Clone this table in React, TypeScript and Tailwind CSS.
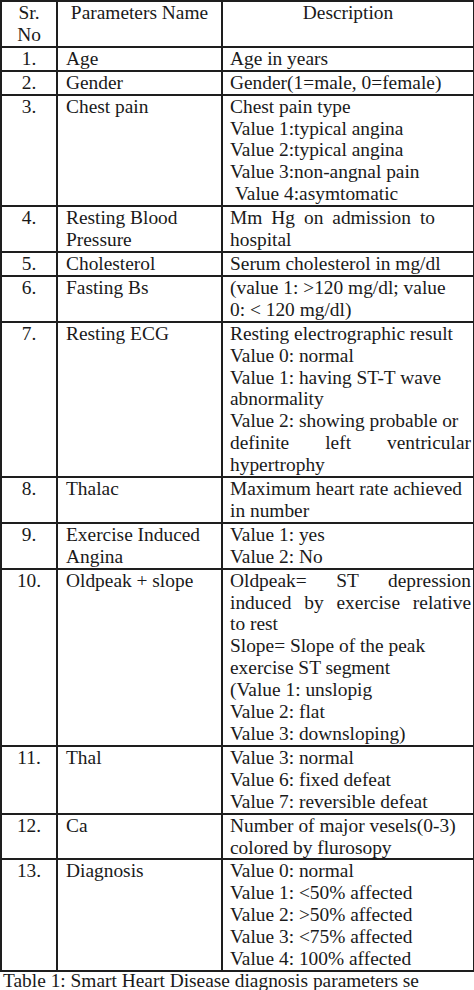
import React from 'react';

type Line = { text: string; justify?: boolean; indent?: boolean; width?: string };
type Row = { no: string; name: string[]; desc: Line[] };

const L = (text: string, justify = false, indent = false, width?: string): Line => ({ text, justify, indent, width });

const rows: Row[] = [
  { no: '1.', name: ['Age'], desc: [L('Age in years')] },
  { no: '2.', name: ['Gender'], desc: [L('Gender(1=male, 0=female)')] },
  {
    no: '3.',
    name: ['Chest pain'],
    desc: [
      L('Chest pain type'),
      L('Value 1:typical angina'),
      L('Value 2:typical angina'),
      L('Value 3:non-angnal pain'),
      L('Value 4:asymtomatic', false, true),
    ],
  },
  {
    no: '4.',
    name: ['Resting Blood', 'Pressure'],
    desc: [L('Mm Hg on admission to', true, false, 'w-[205px]'), L('hospital')],
  },
  { no: '5.', name: ['Cholesterol'], desc: [L('Serum cholesterol in mg/dl')] },
  { no: '6.', name: ['Fasting Bs'], desc: [L('(value 1: >120 mg/dl; value'), L('0: < 120 mg/dl)')] },
  {
    no: '7.',
    name: ['Resting ECG'],
    desc: [
      L('Resting electrographic result'),
      L('Value 0: normal'),
      L('Value 1: having ST-T wave'),
      L('abnormality'),
      L('Value 2: showing probable or'),
      L('definite left ventricular', true),
      L('hypertrophy'),
    ],
  },
  { no: '8.', name: ['Thalac'], desc: [L('Maximum heart rate achieved'), L('in number')] },
  { no: '9.', name: ['Exercise Induced', 'Angina'], desc: [L('Value 1: yes'), L('Value 2: No')] },
  {
    no: '10.',
    name: ['Oldpeak + slope'],
    desc: [
      L('Oldpeak= ST depression', true),
      L('induced by exercise relative', true),
      L('to rest'),
      L('Slope= Slope of the peak'),
      L('exercise ST segment'),
      L('(Value 1: unslopig'),
      L('Value 2: flat'),
      L('Value 3: downsloping)'),
    ],
  },
  {
    no: '11.',
    name: ['Thal'],
    desc: [L('Value 3: normal'), L('Value 6: fixed defeat'), L('Value 7: reversible defeat')],
  },
  { no: '12.', name: ['Ca'], desc: [L('Number of major vesels(0-3)'), L('colored by flurosopy')] },
  {
    no: '13.',
    name: ['Diagnosis'],
    desc: [
      L('Value 0: normal'),
      L('Value 1: <50% affected'),
      L('Value 2: >50% affected'),
      L('Value 3: <75% affected'),
      L('Value 4: 100% affected'),
    ],
  },
];

const cell = 'border-2 border-[#1e1e1e] align-top p-0';

export default function App() {
  return (
    <div className="w-[474px] h-[990px] bg-white overflow-hidden font-['Liberation_Serif',serif] text-[19.4px] leading-[21.9px] text-[#1a1a1a]">
      <table className="w-[473px] table-fixed border-collapse">
        <colgroup>
          <col className="w-[56px]" />
          <col className="w-[165px]" />
          <col className="w-[252px]" />
        </colgroup>
        <thead>
          <tr>
            <th className={`${cell} font-normal text-center`}>
              <div>Sr.</div>
              <div>No</div>
            </th>
            <th className={`${cell} font-normal text-center`}>Parameters Name</th>
            <th className={`${cell} font-normal text-center`}>Description</th>
          </tr>
        </thead>
        <tbody>
          {rows.map((r) => (
            <tr key={r.no}>
              <td className={`${cell} text-center`}>{r.no}</td>
              <td className={`${cell} pl-[8px]`}>
                {r.name.map((n) => (
                  <div key={n}>{n}</div>
                ))}
              </td>
              <td className={`${cell} pl-[7px] pr-[2px]`}>
                {r.desc.map((d) => (
                  <div
                    key={d.text}
                    className={`${d.justify ? 'text-justify [text-align-last:justify]' : ''} ${d.indent ? 'pl-[5px]' : ''} ${d.width ?? ''}`}
                  >
                    {d.text}
                  </div>
                ))}
              </td>
            </tr>
          ))}
        </tbody>
      </table>
      <p className="pl-[3px] leading-[18px] whitespace-nowrap">Table 1: Smart Heart Disease diagnosis parameters se</p>
    </div>
  );
}
